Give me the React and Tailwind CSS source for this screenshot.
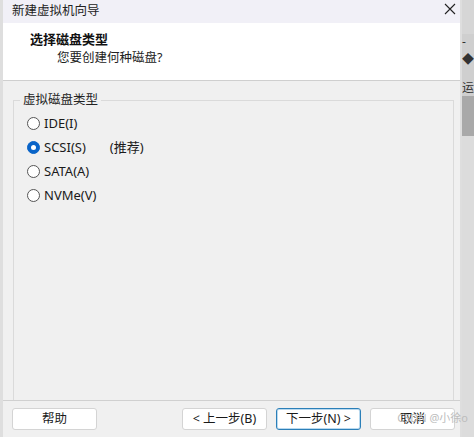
import React from "react";

const font = { fontFamily: '"Noto Sans", "Noto Sans CJK SC", sans-serif' };

function Radio({ label, checked, extra }) {
  return (
    <div className="flex items-center h-[24px]">
      <span
        className={
          "w-[13px] h-[13px] rounded-full flex items-center justify-center shrink-0 " +
          (checked ? "border-[1px] border-[#0a64c8] bg-[#0a64c8]" : "border border-[#555] bg-white")
        }
      >
        {checked && <span className="w-[5px] h-[5px] rounded-full bg-white" />}
      </span>
      <span className="ml-[4px] text-[13px] text-[#1a1a1a] leading-none">{label}</span>
      {extra && <span className="ml-[24px] text-[13px] text-[#1a1a1a] leading-none">{extra}</span>}
    </div>
  );
}

function Btn({ children, primary, className = "" }) {
  return (
    <button
      className={
        "h-[22px] w-[85px] rounded-[3px] bg-white text-[12.5px] text-[#1a1a1a] flex items-center justify-center " +
        (primary ? "border border-[#2b7fb8] shadow-[inset_0_0_0_1px_#b9d9ef]" : "border border-[#d4d4d4]") +
        " " + className
      }
    >
      {children}
    </button>
  );
}

export default function App() {
  return (
    <div className="w-[474px] h-[437px] flex bg-[#d2d2d2] overflow-hidden" style={font}>
      {/* dialog window */}
      <div className="w-[465px] h-[437px] flex flex-col border-l-[3px] border-r-[2px] border-[#dedede] bg-[#f0f0f0]">
        {/* title bar */}
        <div className="h-[23px] bg-[#f1f0f7] flex items-center justify-between pl-[9px] pr-[4px]">
          <span className="text-[12.5px] text-[#222]">新建虚拟机向导</span>
          <svg width="12" height="12" viewBox="0 0 12 12" className="-mt-[5px]">
            <path d="M1 1 L11 11 M11 1 L1 11" stroke="#222" strokeWidth="1.1" />
          </svg>
        </div>
        {/* header */}
        <div className="h-[58px] bg-white border-b border-[#cfcfcf] pl-[27px] pt-[7px]">
          <div className="text-[13px] font-bold text-[#111] leading-[18px]">选择磁盘类型</div>
          <div className="text-[12.5px] text-[#222] leading-[18px] pl-[27px] mt-[1px]">您要创建何种磁盘?</div>
        </div>
        {/* body */}
        <div className="flex-1 flex flex-col pl-[10px] pr-[6px] pt-[19px]">
          <div className="relative flex-1 border border-[#dadada] border-b-0 pt-[10px] pl-[13px]">
            <span className="absolute -top-[9px] left-[6px] bg-[#f0f0f0] px-[3px] text-[12.5px] text-[#222] leading-[16px]">
              虚拟磁盘类型
            </span>
            <div className="flex flex-col">
              <Radio label="IDE(I)" />
              <Radio label="SCSI(S)" checked extra="(推荐)" />
              <Radio label="SATA(A)" />
              <Radio label="NVMe(V)" />
            </div>
          </div>
        </div>
        {/* footer */}
        <div className="h-[37px] border-t border-[#d0d0d0] flex items-center pl-[9px] pr-[5px] relative">
          <Btn>帮助</Btn>
          <div className="flex-1" />
          <Btn>&lt; 上一步(B)</Btn>
          <Btn primary className="ml-[9px]">下一步(N) &gt;</Btn>
          <Btn className="ml-[9px]">取消</Btn>
          <span className="absolute right-[-8px] top-[11px] text-[11px] text-[#bdbdbd] leading-none">
            CSDN @小徐o
          </span>
        </div>
      </div>
      {/* desktop behind */}
      <div className="flex-1 flex flex-col text-[#333]">
        <div className="h-[34px] bg-[#d6d6d6]" />
        <div className="h-[62px] bg-[#cfcfcf] flex flex-col text-[12px] leading-none">
          <span className="mt-[2px]">-</span>
          <span className="mt-[6px]">◆</span>
          <span className="mt-[16px]">运</span>
        </div>
        <div className="h-[40px] bg-[#a9a9a9]" />
        <div className="flex-1 bg-[#dcdcdc]" />
      </div>
    </div>
  );
}
